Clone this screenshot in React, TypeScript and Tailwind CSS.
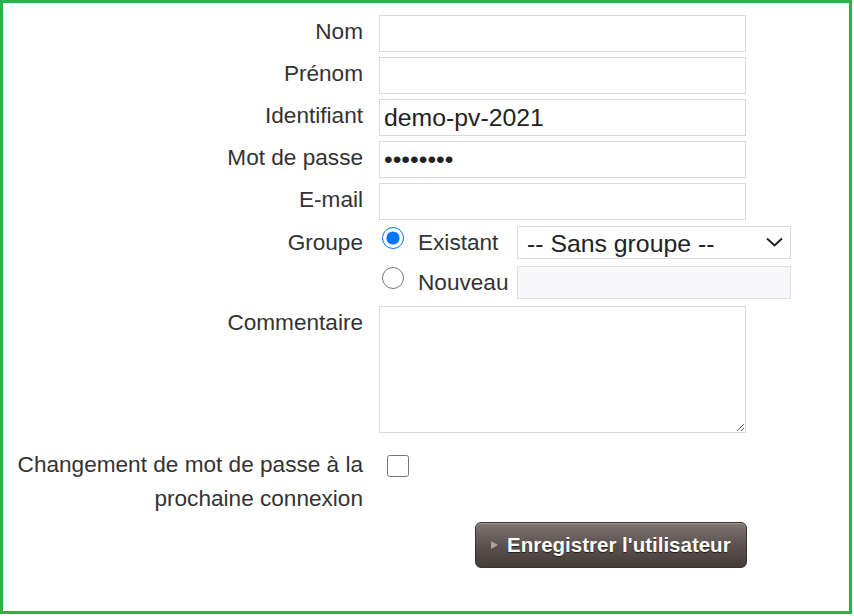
import React from 'react';

const font = "font-['Liberation_Sans',Arial,sans-serif]";

interface RowProps {
  label: string;
  className?: string;
  children: React.ReactNode;
}

const Row: React.FC<RowProps> = ({ label, className = '', children }) => (
  <div className={`flex gap-4 ${className}`}>
    <label className="w-[348px] shrink-0 text-right text-[22.6px] leading-[34px] text-[#333]">
      {label}
    </label>
    <div className="flex-1">{children}</div>
  </div>
);

const inputCls =
  'block w-[367px] h-[37px] px-[4px] border border-[#dadada] bg-white text-[24.8px] text-[#222] outline-none';

export default function App() {
  return (
    <div className={`w-[852px] h-[614px] border-[3px] border-[#2bb34b] bg-white ${font}`}>
      <form className="flex flex-col pl-3 pt-3" onSubmit={(e) => e.preventDefault()}>
        <Row label="Nom">
          <input type="text" className={inputCls} />
        </Row>
        <Row label="Prénom" className="mt-[5px]">
          <input type="text" className={inputCls} />
        </Row>
        <Row label="Identifiant" className="mt-[5px]">
          <input type="text" defaultValue="demo-pv-2021" className={`${inputCls} bg-[#e8f0fe]`} />
        </Row>
        <Row label="Mot de passe" className="mt-[5px]">
          <input type="password" defaultValue="12345678" className={`${inputCls} bg-[#e8f0fe]`} />
        </Row>
        <Row label="E-mail" className="mt-[5px]">
          <input type="text" className={inputCls} />
        </Row>

        <Row label="Groupe" className="mt-[6px]">
          <div className="grid grid-cols-[39px_99px_274px] grid-rows-[33px_33px] gap-y-[7px] text-[22.6px] leading-[34px] text-[#333]">
            <div className="pl-[3px] pt-px">
              <input type="radio" name="groupe" defaultChecked className="block w-[22px] h-[22px] m-0" />
            </div>
            <span>Existant</span>
            <div className="relative">
              <select className="block w-[274px] h-[33px] appearance-none border border-[#dadada] bg-white pl-[9px] text-[24.8px] text-[#222] outline-none">
                <option>-- Sans groupe --</option>
              </select>
              <svg
                className="pointer-events-none absolute right-[8px] top-[11px]"
                width="17"
                height="10"
                viewBox="0 0 17 10"
                fill="none"
                stroke="#222"
                strokeWidth="2"
              >
                <path d="M1 1.5l7.5 7 7.5-7" />
              </svg>
            </div>
            <div className="pl-[3px] pt-px">
              <input type="radio" name="groupe" className="block w-[22px] h-[22px] m-0" />
            </div>
            <span>Nouveau</span>
            <input
              type="text"
              disabled
              className="block w-[274px] h-[33px] border border-[#e2e2e4] bg-[#f7f7fa] outline-none"
            />
          </div>
        </Row>

        <Row label="Commentaire" className="mt-[7px]">
          <textarea className="block w-[367px] h-[127px] border border-[#dadada] bg-white p-1 text-[20px] outline-none" />
        </Row>

        <Row label="Changement de mot de passe à la prochaine connexion" className="mt-[15px]">
          <input type="checkbox" className="block ml-2 mt-[7px] w-[22px] h-[22px]" />
        </Row>

        <div className="flex mt-[6px] pl-[460px]">
          <button
            type="submit"
            className="flex items-center w-[272px] h-[46px] rounded-[6px] border border-[#3a3330] bg-gradient-to-b from-[#807773] via-[#5c5350] to-[#443c39] pl-[14px] text-white text-[20.5px] font-bold shadow-[inset_0_1px_0_rgba(255,255,255,0.25)] [text-shadow:0_1px_1px_rgba(0,0,0,0.6)]"
          >
            <svg width="9" height="10" viewBox="0 0 9 10" className="mr-[8px]">
              <path d="M1 1l7 4-7 4z" fill="#a9a29f" />
            </svg>
            Enregistrer l'utilisateur
          </button>
        </div>
      </form>
    </div>
  );
}
